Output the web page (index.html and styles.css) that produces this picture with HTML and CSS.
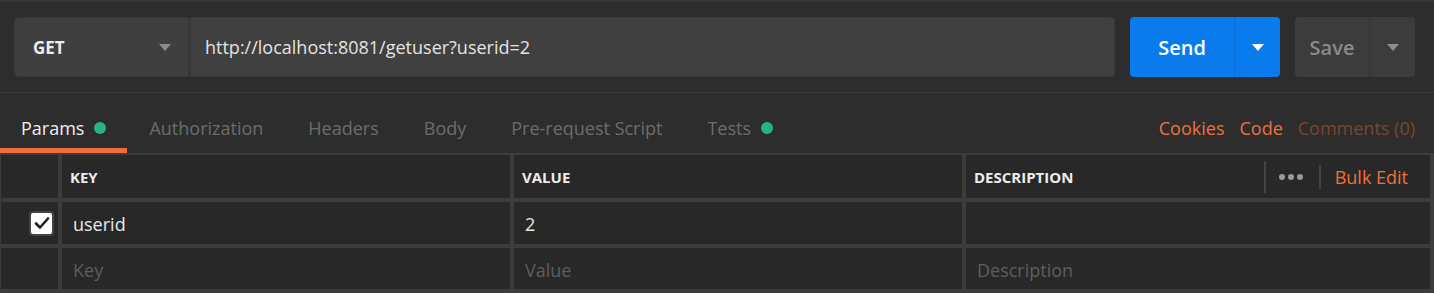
FILE: index.html
```html
<!DOCTYPE html>
<html lang="en">
  <head>
    <meta charset="UTF-8" />
    <meta name="viewport" content="width=device-width, initial-scale=1.0" />
    <title>Request</title>
    <link rel="stylesheet" href="styles.css">
  </head>

  <body>
    <div class="topbar">
      <div class="method">
        <span>GET</span>
        <span class="caret"></span>
      </div>
      <div class="url">http://localhost:8081/getuser?userid=2</div>
      <div class="btn send">
        <span class="label">Send</span>
        <span class="drop"><span class="caret white"></span></span>
      </div>
      <div class="btn save">
        <span class="label">Save</span>
        <span class="drop"><span class="caret"></span></span>
      </div>
    </div>

    <div class="tabs">
      <div class="tab active">Params <i class="dot"></i></div>
      <div class="tab">Authorization</div>
      <div class="tab">Headers</div>
      <div class="tab">Body</div>
      <div class="tab">Pre-request Script</div>
      <div class="tab">Tests <i class="dot"></i></div>
      <div class="links">
        <span class="link">Cookies</span>
        <span class="link">Code</span>
        <span class="link dim">Comments (0)</span>
      </div>
    </div>

    <div class="grid">
      <div class="cell"></div>
      <div class="cell head">KEY</div>
      <div class="cell head">VALUE</div>
      <div class="cell head desc">
        <span>DESCRIPTION</span>
        <span class="tools">
          <span class="sep tall"></span>
          <svg class="more" width="24" height="6" viewBox="0 0 24 6"><circle cx="3" cy="3" r="3" fill="#9a9a9a"/><circle cx="12" cy="3" r="3" fill="#9a9a9a"/><circle cx="21" cy="3" r="3" fill="#9a9a9a"/></svg>
          <span class="sep"></span>
          <span class="bulk">Bulk Edit</span>
        </span>
      </div>

      <div class="cell check"><span class="box"><svg width="16" height="14" viewBox="0 0 16 14"><path d="M2 7.5 L6 11.5 L14 2.5" fill="none" stroke="#222" stroke-width="2.6" stroke-linecap="round" stroke-linejoin="round"/></svg></span></div>
      <div class="cell">userid</div>
      <div class="cell">2</div>
      <div class="cell"></div>

      <div class="cell"></div>
      <div class="cell ph">Key</div>
      <div class="cell ph">Value</div>
      <div class="cell ph">Description</div>
    </div>
  </body>
</html>
```

FILE: styles.css
```css
* { box-sizing: border-box; }
body { margin: 0; background: #2d2d2d; font-family: "Open Sans", "Noto Sans", sans-serif; color: #e6e6e6; }

.topbar { display: flex; height: 93px; padding: 15px 19px 0 14px; border-top: 2px solid #363636; border-bottom: 1px solid #3b3b3b; }
.method { width: 175px; height: 60px; display: flex; align-items: center; justify-content: space-between; padding: 0 17px 0 18px; background: #3f3f3f; border: 1px solid #363636; border-radius: 4px 0 0 4px; font-weight: 700; font-size: 17px; color: #ececec; }
.url { width: 926px; height: 60px; display: flex; align-items: center; padding-left: 14px; background: #404040; border: 1px solid #363636; border-left: 2px solid #383838; border-radius: 0 4px 4px 0; font-size: 18px; color: #e4e4e4; }

.caret { width: 0; height: 0; border-left: 6px solid transparent; border-right: 6px solid transparent; border-top: 7px solid #8c8c8c; }
.caret.white { border-top-color: #fff; }

.btn { display: flex; height: 60px; border-radius: 4px; }
.btn .label { display: flex; align-items: center; justify-content: center; font-weight: 600; font-size: 20px; }
.btn .drop { display: flex; align-items: center; justify-content: center; }
.send { width: 150px; margin-left: 15px; background: #097bed; }
.send .label { width: 104px; color: #fff; }
.send .drop { width: 46px; border-left: 1px solid #0a6ed5; }
.save { width: 120px; margin-left: 15px; background: #3c3c3c; }
.save .label { width: 74px; color: #8a8a8a; }
.save .drop { width: 46px; border-left: 1px solid #353535; }

.tabs { display: flex; align-items: stretch; height: 62px; border-bottom: 2px solid #3c3c3c; font-size: 18px; }
.tab { display: flex; align-items: center; gap: 10px; padding: 15px 23px 0 22px; color: #6c6c6c; border-bottom: 5px solid transparent; }
.tab.active { color: #efefef; border-bottom-color: #f26b3a; padding: 15px 21px 0 21px; }
.dot { display: inline-block; width: 12px; height: 12px; border-radius: 50%; background: #26b57f; }
.links { margin-left: auto; display: flex; align-items: center; gap: 15px; padding: 15px 19px 5px 0; }
.link { color: #f0703d; }
.link.dim { color: #7b4530; }

.grid { display: grid; grid-template-columns: 57px 448px 448px 1fr; grid-template-rows: 43px 42px 41px; gap: 4px; padding: 0 4px 4px 1px; background: #3c3c3c; }
.cell { background: #282828; display: flex; align-items: center; padding: 2px 0 0 11px; font-size: 18px; color: #e8e8e8; }
.head { font-weight: 700; font-size: 15px; padding: 0 0 0 8px; color: #ececec; }
.ph { color: #5e5e5e; }
.desc { justify-content: space-between; padding-right: 22px; }
.tools { display: flex; align-items: center; font-weight: 400; }
.sep { width: 2px; height: 24px; background: #444; }
.sep.tall { height: 32px; }
.more { margin: 0 16px 0 13px; }
.bulk { color: #f0703d; font-size: 18px; margin-left: 14px; }

.check { justify-content: flex-end; padding: 0 4px 0 0; }
.box { width: 25px; height: 25px; background: #fff; border: 2px solid #444; border-radius: 4px; display: flex; align-items: center; justify-content: center; }
```
